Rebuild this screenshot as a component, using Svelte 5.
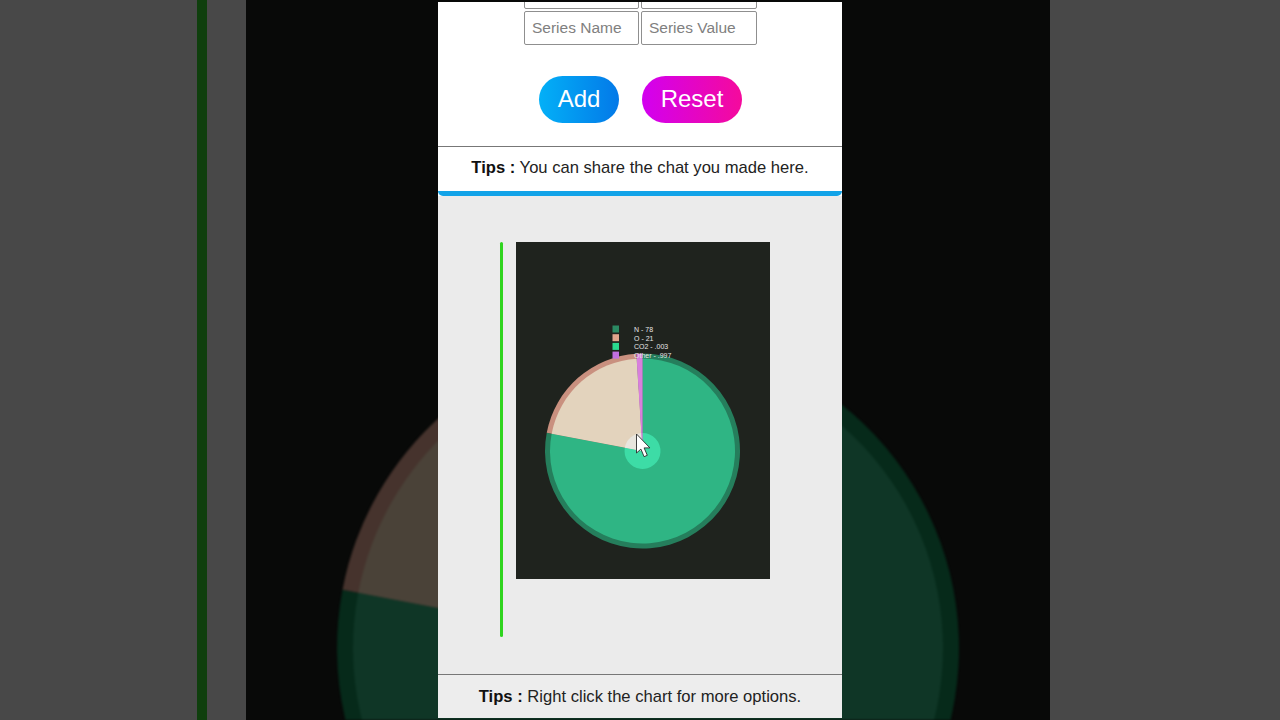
<script>
  const data = [
    { name: 'N', value: 78, label: 'N - 78', outer: '#257e5c', inner: '#2fb584', hub: '#3ddca6', swatch: '#2b8a63', dimOuter: '#062a1a', dimInner: '#0f3626' },
    { name: 'O', value: 21, label: 'O - 21', outer: '#c9907f', inner: '#e3d3bd', hub: '#e8e5de', swatch: '#e0a58d', dimOuter: '#46332d', dimInner: '#4a4238' },
    { name: 'CO2', value: 0.003, label: 'CO2 - .003', outer: '#2ad98e', inner: '#2ad98e', hub: '#2ad98e', swatch: '#2ad98e', dimOuter: '#062a1a', dimInner: '#0f3626' },
    { name: 'Other', value: 0.997, label: 'Other - .997', outer: '#d478dc', inner: '#d87fdc', hub: '#d87fdc', swatch: '#c26fe0', dimOuter: '#46332d', dimInner: '#4a4238' }
  ];

  function slices(cx, cy, r, key) {
    let start = 0;
    return data.map((d) => {
      const end = start + (d.value / 100) * Math.PI * 2;
      const large = end - start > Math.PI ? 1 : 0;
      const p = (a) => `${(cx + r * Math.sin(a)).toFixed(2)} ${(cy - r * Math.cos(a)).toFixed(2)}`;
      const path = `M${cx} ${cy}L${p(start)}A${r} ${r} 0 ${large} 1 ${p(end)}Z`;
      start = end;
      return { path, fill: d[key], name: d.name };
    });
  }

  const rings = [
    ...slices(642.5, 451, 97.5, 'outer'),
    ...slices(642.5, 451, 92.5, 'inner'),
    ...slices(642.5, 451, 18, 'hub')
  ];
  const ambient = [
    ...slices(648, 648, 311, 'dimOuter'),
    ...slices(648, 648, 295, 'dimInner')
  ];
</script>

<div class="stage">
  <div class="side left"><span class="bar"></span></div>

  <div class="centre">
    <svg class="ambient" viewBox="246 0 804 720" aria-hidden="true">
      {#each ambient as s}
        <path d={s.path} fill={s.fill} />
      {/each}
    </svg>

    <main class="phone">
      <section class="form">
        <div class="row clipped">
          <input aria-label="Series name above" />
          <input aria-label="Series value above" />
        </div>
        <div class="row">
          <input placeholder="Series Name" />
          <input placeholder="Series Value" />
        </div>
        <div class="actions">
          <button class="add">Add</button>
          <button class="reset">Reset</button>
        </div>
      </section>

      <p class="tip share"><b>Tips :</b> You can share the chat you made here.</p>

      <section class="preview">
        <span class="rule"></span>
        <svg class="chart" viewBox="516 242 254 337" role="img" aria-label="Pie chart">
          <rect x="516" y="242" width="254" height="337" fill="#1f231e" />
          {#each rings as s}
            <path d={s.path} fill={s.fill} />
          {/each}
          {#each data as d, i}
            <rect x="612.5" y={325.5 + i * 8.7} width="6.5" height="7" fill={d.swatch} />
            <text x="634" y={332 + i * 8.7} class="legend">{d.label}</text>
          {/each}
          <path
            d="M636.5 434v19l4.4-3.9 3.2 7.6 3.2-1.4-3.2-7.4h5.8z"
            fill="#fff"
            stroke="#2a2a2a"
            stroke-width="0.9"
            stroke-linejoin="round"
          />
        </svg>
      </section>

      <p class="tip right"><b>Tips :</b> Right click the chart for more options.</p>
    </main>
  </div>

  <div class="side"></div>
</div>

<style>
  :global(body) {
    margin: 0;
    background: #080908;
  }
  .stage {
    display: flex;
    width: 1280px;
    height: 720px;
    overflow: hidden;
    font-family: "Liberation Sans", Arial, sans-serif;
  }
  .side {
    flex: 1;
    background: #484848;
  }
  .left {
    flex: none;
    width: 246px;
    box-sizing: border-box;
    padding-left: 197px;
  }
  .bar {
    display: block;
    width: 10px;
    height: 100%;
    background: #0f3f0d;
  }
  .centre {
    position: relative;
    flex: none;
    width: 804px;
    height: 720px;
    box-sizing: border-box;
    padding-left: 192px;
    background: #080908;
    overflow: hidden;
    display: flex;
  }
  .ambient {
    position: absolute;
    inset: 0;
    width: 804px;
    height: 720px;
    filter: blur(1px);
  }
  .phone {
    position: relative;
    width: 404px;
    margin: 2px 0;
    height: 716px;
    display: flex;
    flex-direction: column;
    background: #fff;
  }
  .form {
    height: 145px;
    box-sizing: border-box;
    border-bottom: 1px solid #777;
    display: flex;
    flex-direction: column;
    align-items: center;
    overflow: hidden;
  }
  .row {
    display: flex;
    gap: 2px;
    width: 233px;
    flex: none;
    margin-left: 1px;
  }
  .clipped {
    height: 7px;
    margin-bottom: 2px;
    align-items: flex-end;
  }
  input {
    width: 116px;
    height: 34px;
    box-sizing: border-box;
    border: 1px solid #8f8f8f;
    border-radius: 2px;
    padding: 0 7px;
    background: #fff;
    font: 15.5px "Liberation Sans", Arial, sans-serif;
    flex: none;
  }
  .row input:first-child {
    width: 115px;
  }
  input::placeholder {
    color: #808080;
    opacity: 1;
  }
  .actions {
    display: flex;
    gap: 23px;
    margin-top: 31px;
    margin-left: 1px;
  }
  button {
    height: 47px;
    border: 0;
    border-radius: 24px;
    color: #fff;
    font: 24px/45px "Liberation Sans", Arial, sans-serif;
    padding: 0 0 2px;
  }
  .add {
    width: 80px;
    background: linear-gradient(90deg, #03b0f7, #0379e8);
  }
  .reset {
    width: 100px;
    background: linear-gradient(90deg, #d200f0, #f50a9c);
  }
  .tip {
    margin: 0;
    text-align: center;
    font-size: 16.6px;
    color: #222;
    box-sizing: border-box;
  }
  .tip b {
    color: #111;
  }
  .share {
    height: 49px;
    padding-top: 11px;
    border-bottom: 5px solid #12a3e8;
    border-radius: 0 0 5px 5px;
  }
  .preview {
    height: 479px;
    box-sizing: border-box;
    padding: 46px 0 0 62px;
    background: #ebebeb;
    border-bottom: 1px solid #777;
    display: flex;
    align-items: flex-start;
    gap: 13px;
  }
  .rule {
    width: 3px;
    height: 395px;
    border-radius: 2px;
    background: #2fd41f;
    flex: none;
  }
  .chart {
    width: 254px;
    height: 337px;
    flex: none;
    display: block;
  }
  .legend {
    font: 7px "Liberation Sans", Arial, sans-serif;
    fill: #e6e6e6;
  }
  .right {
    flex: 1;
    padding-top: 12px;
    background: #ededed;
  }
</style>
